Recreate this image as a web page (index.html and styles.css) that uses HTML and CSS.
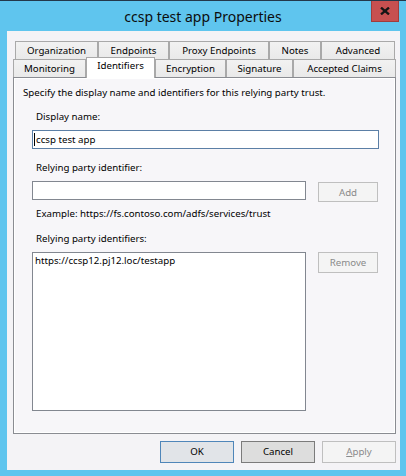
FILE: index.html
```html
<!DOCTYPE html>
<html lang="en">
<head>
<meta charset="utf-8">
<title>ccsp test app Properties</title>
<link rel="stylesheet" href="styles.css">
</head>
<body>
<div class="window">
  <div class="titlebar">
    <div class="title">ccsp test app Properties</div>
    <button class="close" aria-label="Close">
      <svg width="10" height="8" viewBox="0 0 10 8"><path d="M1 0.6 L9 7.4 M9 0.6 L1 7.4" stroke="#151515" stroke-width="2.3" fill="none"/></svg>
    </button>
  </div>
  <div class="client">
    <div class="tabs">
      <div class="tabrow row1">
        <div class="tab">Organization</div>
        <div class="tab">Endpoints</div>
        <div class="tab">Proxy Endpoints</div>
        <div class="tab">Notes</div>
        <div class="tab">Advanced</div>
      </div>
      <div class="tabrow row2">
        <div class="tab">Monitoring</div>
        <div class="tab selected">Identifiers</div>
        <div class="tab">Encryption</div>
        <div class="tab">Signature</div>
        <div class="tab">Accepted Claims</div>
      </div>
    </div>
    <div class="panel">
      <p class="intro">Specify the display name and identifiers for this relying party trust.</p>
      <div class="fields">
        <div class="label first">Display name:</div>
        <div class="textbox focused wide"><span class="caret"></span>ccsp test app</div>

        <div class="label">Relying party identifier:</div>
        <div class="row">
          <div class="textbox narrow"></div>
          <button class="btn disabled add">Add</button>
        </div>
        <div class="label example">Example: https://fs.contoso.com/adfs/services/trust</div>

        <div class="label ids">Relying party identifiers:</div>
        <div class="row">
          <div class="listbox">https://ccsp12.pj12.loc/testapp</div>
          <button class="btn disabled remove">Remove</button>
        </div>
      </div>
    </div>
    <div class="buttons">
      <button class="btn default">OK</button>
      <button class="btn normal">Cancel</button>
      <button class="btn disabled"><u>A</u>pply</button>
    </div>
  </div>
</div>
</body>
</html>
```

FILE: styles.css
```css
* { box-sizing: border-box; }

html, body {
  margin: 0;
  padding: 0;
}

body {
  width: 406px;
  height: 476px;
  overflow: hidden;
  background: #5fc5ee;
  font-family: "Noto Sans", "Open Sans", sans-serif;
  font-size: 9.7px;
  color: #000;
}

.window {
  width: 406px;
  height: 476px;
}

.titlebar {
  height: 31px;
  border-top: 1px solid #23384a;
  display: grid;
  grid-template-columns: 1fr auto 1fr;
  align-items: center;
}

.title {
  grid-column: 2;
  font-size: 14px;
  line-height: 20px;
  color: #0c0c0c;
  margin-top: 1px;
}

.close {
  grid-column: 3;
  justify-self: end;
  align-self: start;
  width: 28px;
  height: 21px;
  margin: 0 7px 0 0;
  padding: 0;
  background: #c75050;
  border: 1px solid #a13c3c;
  border-top: none;
  display: flex;
  align-items: center;
  justify-content: center;
}

.client {
  margin: 0 6px 0 7px;
  height: 439px;
  background: #f4f3f6;
  padding-top: 10px;
}

.tabs {
  display: flex;
  flex-direction: column;
}

.tabrow {
  display: grid;
  height: 18px;
}

.row1 {
  margin-left: 8px;
  grid-template-columns: 83px 71px 100px 52px 74px;
}

.row2 {
  margin-left: 6px;
  grid-template-columns: 73px 69px 71px 67px 103px;
}

.tab {
  border: 1px solid #a9a9a9;
  border-bottom: none;
  background: linear-gradient(#f2f2f2, #e9e9e9);
  text-align: center;
  line-height: 17px;
  white-space: nowrap;
  color: #000;
}

.tab.selected {
  position: relative;
  z-index: 2;
  margin-top: -2px;
  margin-bottom: -1px;
  background: #ffffff;
  line-height: 16px;
}

.panel {
  margin-left: 6px;
  width: 383px;
  height: 357px;
  border: 1px solid #8a8c92;
  background: #f7f6f9;
  box-shadow: inset 0 0 0 1px #ffffff;
  padding: 8px 0 0 9px;
}

.intro {
  margin: 0;
  line-height: 14px;
}

.fields {
  margin-left: 9px;
  display: flex;
  flex-direction: column;
}

.label {
  line-height: 14px;
  padding-left: 4px;
  margin-top: 12px;
  margin-bottom: 6px;
}

.label.first {
  margin-top: 10px;
}

.label.example {
  margin-top: 5px;
  margin-bottom: 0;
}

.label.ids {
  margin-top: 11px;
}

.textbox {
  height: 19px;
  border: 1px solid #828790;
  background: #ffffff;
  line-height: 17px;
  padding-left: 1px;
  display: flex;
  align-items: center;
  white-space: nowrap;
}

.textbox.focused {
  border-color: #5b7fa6;
}

.textbox.wide {
  width: 347px;
}

.textbox.narrow {
  width: 274px;
}

.caret {
  width: 1px;
  height: 13px;
  background: #000;
  margin-right: 1px;
}

.row {
  display: flex;
  align-items: flex-start;
}

.listbox {
  width: 274px;
  height: 159px;
  border: 1px solid #828790;
  background: #ffffff;
  line-height: 14px;
  padding: 1px 0 0 2px;
}

.btn {
  font-family: inherit;
  font-size: 9.7px;
  width: 74px;
  height: 22px;
  padding: 0;
  margin: 0;
  line-height: 20px;
  text-align: center;
  color: #000;
}

.btn.add {
  width: 60px;
  height: 20px;
  margin: 1px 0 0 12px;
}

.btn.remove {
  width: 60px;
  height: 21px;
  margin-left: 12px;
}

.btn.disabled {
  background: #f4f4f4;
  border: 1px solid #bfbfbf;
  color: #8a8a8a;
}

.btn.default {
  background: #e1e4e8;
  border: 1px solid #4f86b9;
}

.btn.normal {
  background: #dddddd;
  border: 1px solid #7b7b7b;
}

.buttons {
  display: flex;
  justify-content: flex-end;
  gap: 7px;
  margin-top: 7px;
  padding-right: 4px;
}
```
